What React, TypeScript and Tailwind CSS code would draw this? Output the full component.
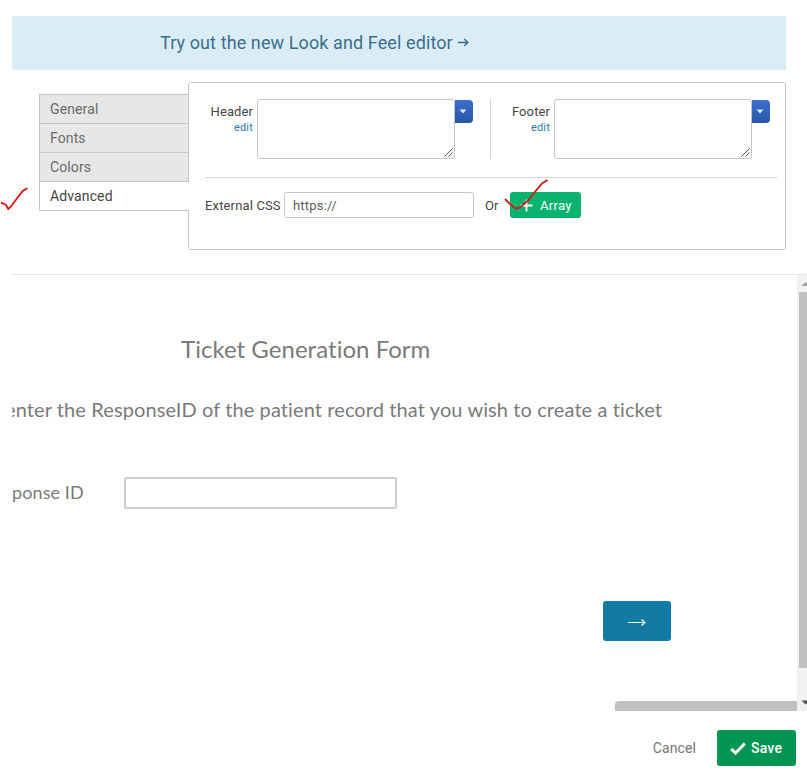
const tabs = ["General", "Fonts", "Colors", "Advanced"];

function RichField({ label, labelWidth }: { label: string; labelWidth: string }) {
  return (
    <div className="flex items-start">
      <div className={`${labelWidth} pt-[5px] mr-1 text-right`}>
        <div className="text-[13px] leading-4 tracking-[0.1px] text-[#454545]">{label}</div>
        <a className="block text-[11px] leading-4 tracking-[0.2px] text-[#2a7aa8]">edit</a>
      </div>
      <div className="relative w-[198px] h-[60px]">
        <textarea className="block w-full h-full resize-none rounded-[3px] border border-[#c6c6c6] bg-white" />
        <svg className="absolute right-[2px] bottom-[2px]" width="9" height="9" viewBox="0 0 9 9">
          <path d="M0.5 8.5L8.5 0.5M4.5 8.5L8.5 4.5" stroke="#555" strokeWidth="1" fill="none" />
        </svg>
      </div>
      <button className="mt-px flex w-[18px] h-[23px] items-center justify-center rounded-r-[4px] bg-linear-to-b from-[#3b6fd0] to-[#2657a8]">
        <svg className="-translate-x-px" width="8" height="5" viewBox="0 0 8 5">
          <path d="M0.5 0.5h7L4 4.5z" fill="#dfeafa" />
        </svg>
      </button>
    </div>
  );
}

export default function App() {
  return (
    <div className="relative flex flex-col w-[807px] h-[775px] overflow-hidden bg-white font-['Roboto',sans-serif]">
      <div className="mt-4 ml-3 flex w-[774px] h-[54px] shrink-0 items-center bg-[#daedf7] pb-[2px] pl-[148px]">
        <a className="text-[18px] tracking-[0.1px] whitespace-nowrap text-[#3a6f8c]">
          Try out the new Look and Feel editor
          <svg className="ml-[5px] inline-block align-[2px]" width="11" height="9" viewBox="0 0 11 9">
            <path d="M0 4.5h9.5M6.2 1L9.8 4.5L6.2 8" stroke="#3a6f8c" strokeWidth="1.5" fill="none" />
          </svg>
        </a>
      </div>

      <div className="mt-3 ml-[39px] flex h-[168px] shrink-0">
        <nav className="relative z-10 mt-3 -mr-px w-[150px] text-[14px] tracking-[0.12px]">
          {tabs.map((tab) => (
            <div
              key={tab}
              className={
                tab === "Advanced"
                  ? "flex h-[30px] items-center border-y border-l border-[#c6c6c6] bg-white pl-[10px] text-[#454545]"
                  : "flex h-[29px] items-center border-t border-x border-[#c6c6c6] bg-[#e7e7e7] pl-[10px] text-[#6a6a6a]"
              }
            >
              {tab}
            </div>
          ))}
        </nav>
        <section className="w-[598px] rounded-[3px] border border-[#c6c6c6] bg-white pt-4 pl-4">
          <div className="flex">
            <RichField label="Header" labelWidth="w-[48px]" />
            <div className="ml-[17px] h-[60px] w-px bg-[#d4d4d4]" />
            <RichField label="Footer" labelWidth="w-[59px]" />
          </div>
          <div className="mt-[18px] h-px w-[572px] bg-[#d4d4d4]" />
          <div className="mt-[14px] flex h-[26px] items-center text-[13px] text-[#454545]">
            <span className="w-[79px] pt-px tracking-[0.15px] whitespace-nowrap">External CSS</span>
            <input
              className="h-[26px] w-[190px] rounded-[3px] border border-[#c6c6c6] px-2 tracking-[0.2px] text-[#5c5c5c]"
              defaultValue="https://"
            />
            <span className="ml-[11px] w-[25px] pt-px">Or</span>
            <button className="flex h-[26px] w-[71px] items-center rounded-[3px] bg-[#07b36f] pl-[10px] tracking-[0.3px] text-white">
              <svg className="mr-[7px]" width="13" height="13" viewBox="0 0 13 13">
                <path d="M6.5 0.5v12M0.5 6.5h12" stroke="#fff" strokeWidth="1.8" />
              </svg>
              <span className="pt-px">Array</span>
            </button>
          </div>
        </section>
      </div>

      <div className="mt-6 ml-3 flex h-[437px] shrink-0 border-t border-[#e4e4e4] font-['Lato',sans-serif] text-[#7a7a7a]">
        <div className="flex w-[785px] flex-col overflow-hidden">
          <h1 className="mt-[58px] ml-[169px] text-[24px] leading-8 tracking-[0.03px] whitespace-nowrap">
            Ticket Generation Form
          </h1>
          <p className="mt-7 -ml-[7px] text-[20px] leading-8 tracking-[0.1px] whitespace-nowrap">
            enter the ResponseID of the patient record that you wish to create a ticket
          </p>
          <div className="mt-[52px] flex items-center">
            <label className="w-[112px] pb-[2px] text-[18px] tracking-[0.1px] whitespace-nowrap">ponse ID</label>
            <input className="h-8 w-[273px] rounded-[2px] border-2 border-[#cecece]" />
          </div>
          <button className="mt-[92px] ml-[591px] flex h-10 w-[68px] items-center justify-center rounded-[3px] bg-[#127ba3]">
            <svg className="translate-y-[1.5px]" width="18" height="9" viewBox="0 0 18 9">
              <path d="M0 4h17M13.5 1L17 4L13.5 7" stroke="#fff" strokeWidth="1.2" fill="none" />
            </svg>
          </button>
          <div className="mt-auto ml-[603px] h-[10px] shrink-0 rounded-tl-[4px] bg-[#c1c1c3]" />
        </div>
        <div className="flex w-[10px] flex-col bg-[#f1f1f1] pl-[2px]">
          <svg width="8" height="17" viewBox="0 0 8 17">
            <path d="M2.5 11L6.5 7L10.5 11z" fill="#a3a3a3" />
          </svg>
          <div className="h-[376px] bg-[#c1c1c1]" />
          <svg className="mt-auto" width="8" height="17" viewBox="0 0 8 17">
            <path d="M2.5 6.5L6.5 10.5L10.5 6.5z" fill="#505050" />
          </svg>
        </div>
      </div>

      <div className="mt-[19px] flex items-center justify-end pr-[11px] text-[14px]">
        <button className="mr-[21px] tracking-[0.1px] text-[#757575]">Cancel</button>
        <button className="flex h-9 w-[79px] items-center rounded-[3px] bg-[#039653] pl-[13px] text-white">
          <svg className="mr-[5px]" width="16" height="13" viewBox="0 0 16 13">
            <path d="M1.2 6.8L5.6 11L14.8 1.5" stroke="#fff" strokeWidth="3" fill="none" />
          </svg>
          <span className="font-medium tracking-[0.2px]">Save</span>
        </button>
      </div>

      {/* hand-drawn check marks */}
      <svg className="pointer-events-none absolute left-0 top-[186px]" width="32" height="28" viewBox="0 0 32 28">
        <path d="M1 17L3.5 17.5L6 18.8L8.2 23L11 20.5L18 11L23 4.8L27.3 2.3" stroke="#e0100f" strokeWidth="1.8" fill="none" />
      </svg>
      <svg className="pointer-events-none absolute left-[502px] top-[176px]" width="50" height="38" viewBox="0 0 50 38">
        <path d="M3 23L8 28L14 32.7L18 31.5L26 24.5L32 17L40 7.5L45.5 4" stroke="#c9211a" strokeWidth="1.9" fill="none" />
      </svg>
    </div>
  );
}
